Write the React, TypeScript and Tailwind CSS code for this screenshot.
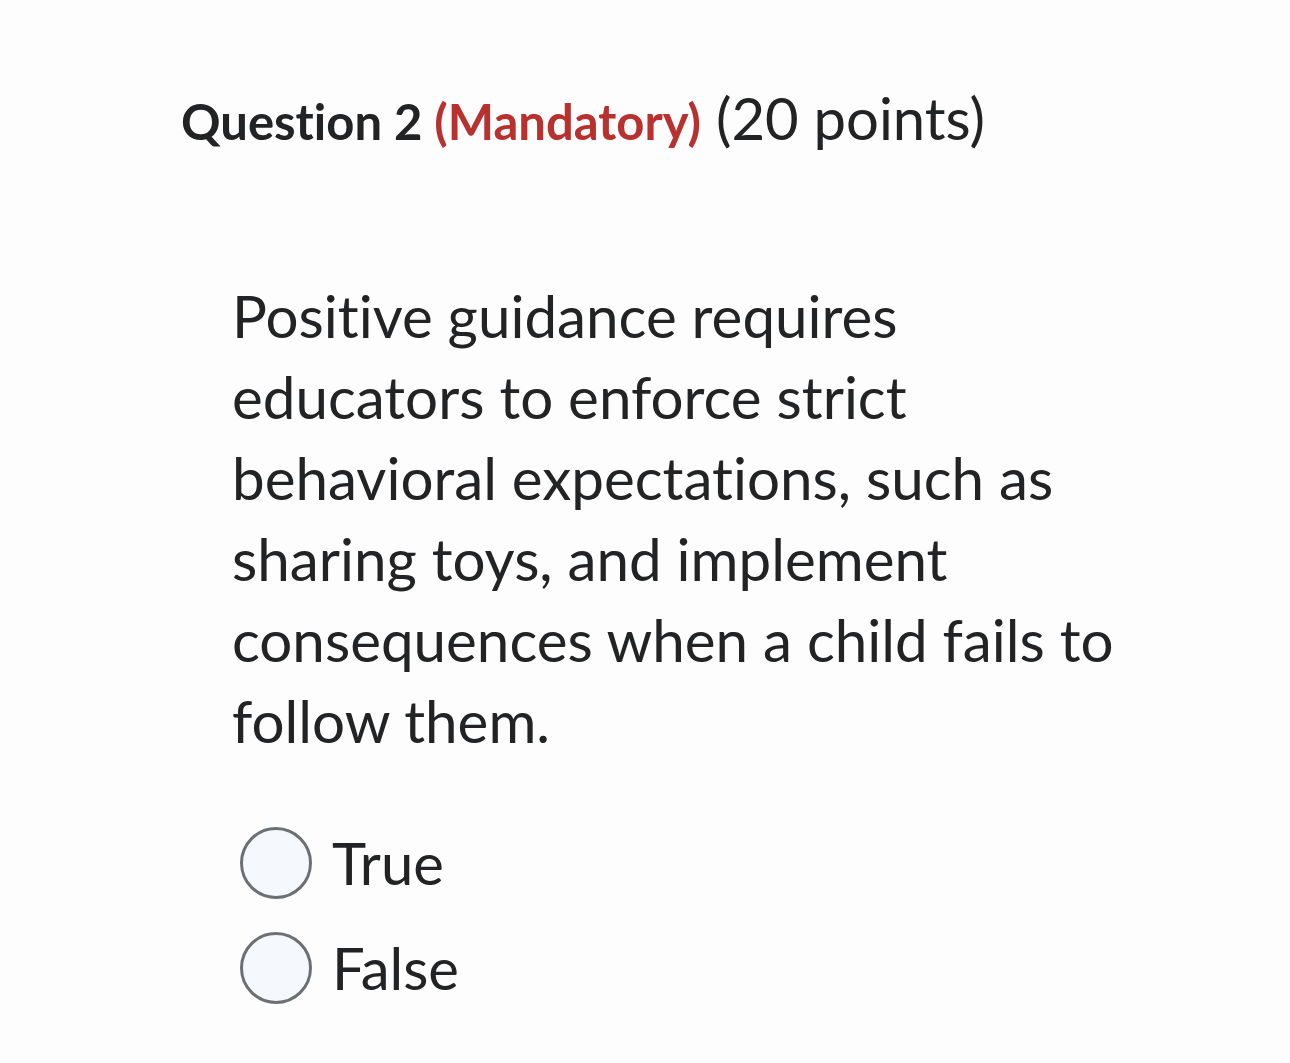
import React, { useState } from 'react';

const options = ['True', 'False'];

export default function App() {
  const [selected, setSelected] = useState<string | null>(null);

  return (
    <div
      className="min-h-screen w-full bg-[#fdfdfd] text-[#222324] [font-variant-ligatures:none]"
      style={{ fontFamily: 'Lato, "Noto Sans", sans-serif' }}
    >
      <div className="pl-[181px] pt-[84px]">
        {/* Header */}
        <h2 className="leading-[68px] whitespace-nowrap">
          <span className="text-[49px] font-bold">Question 2 </span>
          <span className="text-[49px] font-bold text-[#b8312f]">(Mandatory)</span>
          <span className="text-[58px] font-normal"> (20 points)</span>
        </h2>

        {/* Question body */}
        <div className="pl-[51px] pt-[107px] w-[971px]">
          <p className="text-[58.3px] leading-[81px]">
            Positive guidance requires educators to enforce strict behavioral expectations, such as
            sharing toys, and implement consequences when a child fails to follow them.
          </p>

          <div className="mt-[66px] flex flex-col gap-[33px] pl-[8px]">
            {options.map((opt) => (
              <label key={opt} className="flex items-center gap-[20px] cursor-pointer">
                <input
                  type="radio"
                  name="q2"
                  checked={selected === opt}
                  onChange={() => setSelected(opt)}
                  className="appearance-none w-[72px] h-[72px] rounded-full border-[3px] border-[#6c7074] bg-[#f5f8fc] checked:border-[#3e7fc7]"
                />
                <span className="text-[58px] leading-[72px]">{opt}</span>
              </label>
            ))}
          </div>
        </div>
      </div>
    </div>
  );
}
